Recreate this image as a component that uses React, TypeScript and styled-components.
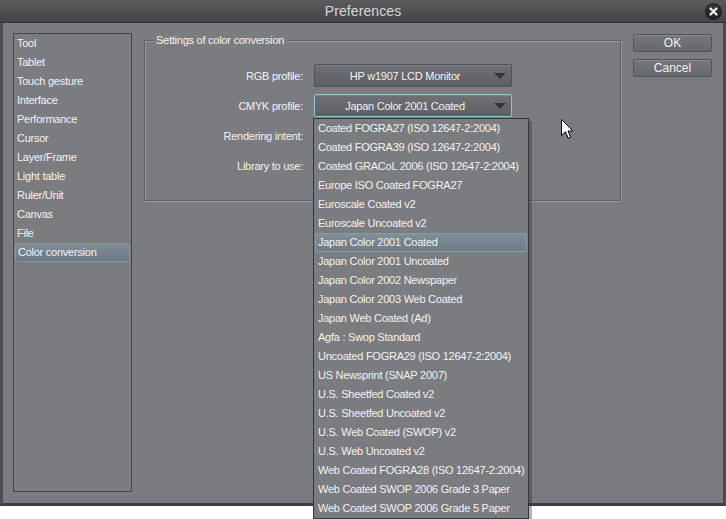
import React from "react";
import styled, { createGlobalStyle } from "styled-components";

const Global = createGlobalStyle`
  html, body { margin: 0; padding: 0; background: #ffffff; }
  body { font-family: "Liberation Sans", Arial, sans-serif; font-size: 11px; }
  * { box-sizing: border-box; }
`;

const Page = styled.div`
  position: relative;
  width: 726px;
  height: 519px;
  overflow: hidden;
  background: #ffffff;
`;

const Window = styled.div`
  position: relative;
  width: 726px;
  height: 506px;
  background: #7b7c80;
  border-left: 3px solid #4e4f52;
  border-right: 3px solid #4a4b4e;
  border-bottom: 3px solid #3c3d3f;
  display: flex;
  flex-direction: column;
`;

const TitleBar = styled.div`
  position: relative;
  height: 23px;
  margin: 0 -3px;
  background: linear-gradient(#5b5b5d, #444446);
  border-bottom: 1px solid #333335;
  display: flex;
  align-items: center;
  justify-content: center;
  color: #d6d6d6;
  font-size: 14px;
  letter-spacing: 0.1px;
`;

const CloseButton = styled.div`
  position: absolute;
  right: 4px;
  top: 3px;
  width: 17px;
  height: 17px;
  border-radius: 50%;
  background: radial-gradient(circle at 50% 35%, #3a3a3a, #141414);
  display: flex;
  align-items: center;
  justify-content: center;
`;

const Body = styled.div`
  flex: 1;
  display: flex;
  align-items: flex-start;
  padding: 10px 0 0 10px;
  gap: 12px;
  color: #f2f2f2;
  letter-spacing: -0.25px;
`;

const Sidebar = styled.div`
  width: 119px;
  height: 459px;
  border: 1px solid #46474b;
  display: flex;
  flex-direction: column;
`;

const SideItem = styled.div<{ $active?: boolean }>`
  height: 19px;
  line-height: ${(p) => (p.$active ? "17px" : "19px")};
  padding-left: ${(p) => (p.$active ? "2px" : "3px")};
  margin: 0 ${(p) => (p.$active ? "1px" : "0")};
  border-radius: 2px;
  white-space: nowrap;
  ${(p) =>
    p.$active
      ? `background: linear-gradient(#7f8d97, #6c7a85); border: 1px solid #8896a0;`
      : ""}
`;

const Main = styled.div`
  padding-top: 7px;
`;

const Group = styled.div`
  position: relative;
  width: 477px;
  height: 161px;
  border: 1px solid #606165;
  box-shadow: inset 1px 1px 0 #96979b, 1px 1px 0 #96979b;
  padding: 23px 0 0 0;
`;

const GroupLabel = styled.div`
  position: absolute;
  top: -7px;
  left: 8px;
  padding: 0 3px;
  background: #7b7c80;
  line-height: 13px;
`;

const Form = styled.div`
  display: grid;
  grid-template-columns: 158px 198px;
  grid-auto-rows: 23px;
  column-gap: 11px;
  row-gap: 7px;
  align-items: center;
`;

const Label = styled.div`
  text-align: right;
  white-space: nowrap;
`;

const SelectWrap = styled.div`
  position: relative;
  height: 23px;
`;

const Select = styled.div<{ $focus?: boolean }>`
  height: 23px;
  border: 1px solid ${(p) => (p.$focus ? "#8ec3da" : "#505155")};
  border-radius: 2px;
  background: linear-gradient(#707175, #5e5f63);
  box-shadow: inset 0 1px 0 #7d7e82;
  display: flex;
  align-items: center;
  padding-right: 16px;
`;

const SelectText = styled.div`
  flex: 1;
  text-align: center;
  white-space: nowrap;
`;

const Arrow = styled.div`
  position: absolute;
  right: 6px;
  top: 9px;
  width: 0;
  height: 0;
  border-left: 6px solid transparent;
  border-right: 6px solid transparent;
  border-top: 6px solid #343436;
`;

const DropList = styled.div`
  position: absolute;
  left: -1px;
  top: 24px;
  width: 216px;
  border: 1px solid #36373a;
  background: #7b7c80;
  box-shadow: 3px 3px 0 rgba(40, 40, 44, 0.35);
  z-index: 5;
  display: flex;
  flex-direction: column;
`;

const DropItem = styled.div<{ $active?: boolean }>`
  height: 19px;
  line-height: ${(p) => (p.$active ? "17px" : "19px")};
  padding-left: ${(p) => (p.$active ? "2px" : "3px")};
  margin: 0 1px;
  border-radius: 2px;
  white-space: nowrap;
  ${(p) =>
    p.$active
      ? `background: linear-gradient(#808e98, #6d7b86); border: 1px solid #8b99a3;`
      : ""}
`;

const Buttons = styled.div`
  display: flex;
  flex-direction: column;
  gap: 7px;
  padding-top: 1px;
`;

const Button = styled.div`
  width: 79px;
  height: 18px;
  border: 1px solid #525357;
  border-radius: 2px;
  background: linear-gradient(#77787c, #67686c);
  box-shadow: inset 0 1px 0 #8a8b8f;
  display: flex;
  align-items: center;
  justify-content: center;
  font-size: 12px;
  letter-spacing: 0;
`;

const Cursor = styled.svg`
  position: absolute;
  left: 561px;
  top: 119px;
  z-index: 10;
`;

const sideItems = [
  "Tool",
  "Tablet",
  "Touch gesture",
  "Interface",
  "Performance",
  "Cursor",
  "Layer/Frame",
  "Light table",
  "Ruler/Unit",
  "Canvas",
  "File",
  "Color conversion",
];

const profiles = [
  "Coated FOGRA27 (ISO 12647-2:2004)",
  "Coated FOGRA39 (ISO 12647-2:2004)",
  "Coated GRACoL 2006 (ISO 12647-2:2004)",
  "Europe ISO Coated FOGRA27",
  "Euroscale Coated v2",
  "Euroscale Uncoated v2",
  "Japan Color 2001 Coated",
  "Japan Color 2001 Uncoated",
  "Japan Color 2002 Newspaper",
  "Japan Color 2003 Web Coated",
  "Japan Web Coated (Ad)",
  "Agfa : Swop Standard",
  "Uncoated FOGRA29 (ISO 12647-2:2004)",
  "US Newsprint (SNAP 2007)",
  "U.S. Sheetfed Coated v2",
  "U.S. Sheetfed Uncoated v2",
  "U.S. Web Coated (SWOP) v2",
  "U.S. Web Uncoated v2",
  "Web Coated FOGRA28 (ISO 12647-2:2004)",
  "Web Coated SWOP 2006 Grade 3 Paper",
  "Web Coated SWOP 2006 Grade 5 Paper",
];

export default function App() {
  return (
    <>
      <Global />
      <Page>
        <Window>
          <TitleBar>
            Preferences
            <CloseButton>
              <svg width="9" height="9" viewBox="0 0 9 9">
                <path d="M1.5 1.5 L7.5 7.5 M7.5 1.5 L1.5 7.5" stroke="#f4f4f4" strokeWidth="2.2" strokeLinecap="round" />
              </svg>
            </CloseButton>
          </TitleBar>
          <Body>
            <Sidebar>
              {sideItems.map((s) => (
                <SideItem key={s} $active={s === "Color conversion"}>
                  {s}
                </SideItem>
              ))}
            </Sidebar>
            <Main>
              <Group>
                <GroupLabel>Settings of color conversion</GroupLabel>
                <Form>
                  <Label>RGB profile:</Label>
                  <SelectWrap>
                    <Select>
                      <SelectText>HP w1907 LCD Monitor</SelectText>
                    </Select>
                    <Arrow />
                  </SelectWrap>
                  <Label>CMYK profile:</Label>
                  <SelectWrap>
                    <Select $focus>
                      <SelectText>Japan Color 2001 Coated</SelectText>
                    </Select>
                    <Arrow />
                    <DropList>
                      {profiles.map((p) => (
                        <DropItem key={p} $active={p === "Japan Color 2001 Coated"}>
                          {p}
                        </DropItem>
                      ))}
                    </DropList>
                  </SelectWrap>
                  <Label>Rendering intent:</Label>
                  <SelectWrap>
                    <Select />
                  </SelectWrap>
                  <Label>Library to use:</Label>
                  <SelectWrap>
                    <Select />
                  </SelectWrap>
                </Form>
              </Group>
            </Main>
            <Buttons>
              <Button>OK</Button>
              <Button>Cancel</Button>
            </Buttons>
          </Body>
        </Window>
        <Cursor width="13" height="21" viewBox="0 0 13 21">
          <path d="M0.5 0.5 L0.5 16.5 L4.5 12.8 L7.2 19.2 L9.6 18.2 L7 12 L12 12 Z" fill="#ffffff" stroke="#000000" strokeWidth="1" strokeLinejoin="miter" />
        </Cursor>
      </Page>
    </>
  );
}
